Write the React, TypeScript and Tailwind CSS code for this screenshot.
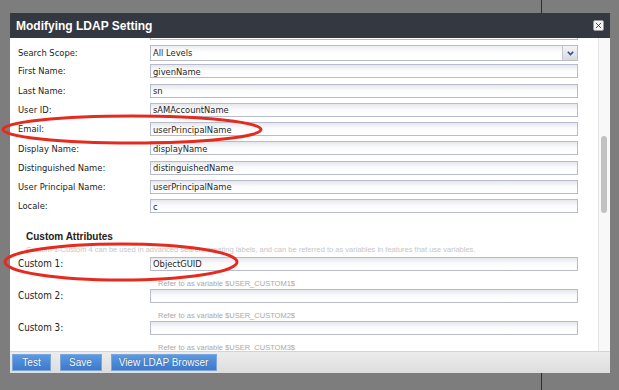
import { X } from "lucide-react";

const fields: [string, string][] = [
  ["First Name:", "givenName"],
  ["Last Name:", "sn"],
  ["User ID:", "sAMAccountName"],
  ["Email:", "userPrincipalName"],
  ["Display Name:", "displayName"],
  ["Distinguished Name:", "distinguishedName"],
  ["User Principal Name:", "userPrincipalName"],
  ["Locale:", "c"],
];

const customs = ["Custom 1:", "Custom 2:", "Custom 3:"];
const customValues = ["ObjectGUID", "", ""];

const font = { fontFamily: '"DejaVu Sans Condensed", "Liberation Sans", sans-serif' };

function TextBox({ value, className = "" }: { value: string; className?: string }) {
  return (
    <div
      className={`flex h-[14px] w-[428px] items-center border border-[#b8bbcc] bg-[linear-gradient(#e6e7ec,#fbfbfc_45%,#fff)] pl-[2px] text-[9.3px] leading-none text-[#1e1e1e] ${className}`}
    >
      {value}
    </div>
  );
}

function Btn({ label, width }: { label: string; width: string }) {
  return (
    <button
      type="button"
      className={`flex h-[17px] ${width} items-center justify-center border border-[#7ea6da] bg-[linear-gradient(#5b9ae2,#3c79cb)] text-[10px] leading-none text-white [text-shadow:0_0_1px_#1d4c8a]`}
      style={{ fontFamily: '"Liberation Sans", sans-serif' }}
    >
      {label}
    </button>
  );
}

export default function App() {
  return (
    <div className="relative h-[390px] w-[619px] overflow-hidden bg-[#7d7d7d]" style={font}>
      {/* page behind the dialog */}
      <div className="h-[13px]">
        <div className="ml-[541px] h-full w-px bg-[#2e2e2e]" />
      </div>

      <div className="ml-[10px] flex h-[360px] w-[600px] flex-col bg-white">
        {/* title bar */}
        <div className="flex h-[25px] items-center justify-between bg-[#343840] pl-[6px] pr-[6px]">
          <span
            className="text-[12px] font-bold leading-none text-white"
            style={{ fontFamily: '"Liberation Sans", sans-serif' }}
          >
            Modifying LDAP Setting
          </span>
          <span className="flex h-[11px] w-[11px] items-center justify-center rounded-[2px] border border-[#9a9a9a] bg-[#f4f4f4]">
            <X size={9} strokeWidth={2.4} className="text-[#3a3a3a]" />
          </span>
        </div>

        {/* body */}
        <div className="flex h-[313px]">
          <div className="w-[588px] overflow-hidden pl-[8px]">
            <div className="-mt-[12px] flex h-[14px] items-center">
              <div className="w-[132px]" />
              <TextBox value="" />
            </div>

            <div className="mt-[5px] flex h-[16px] items-center">
              <div className="w-[132px] text-[9.3px] text-[#222]">Search Scope:</div>
              <div className="flex h-[16px] w-[428px] items-center border border-[#b8bbcc] bg-[linear-gradient(#eeeff2,#fff_50%)] pl-[2px] text-[9.3px] text-[#1e1e1e]">
                <span className="flex-1">All Levels</span>
                <span className="flex h-[14px] w-[15px] items-center justify-center border-l border-[#c4c6d2] bg-[linear-gradient(#f4f4f6,#d9dae0)]">
                  <svg width="7" height="5" viewBox="0 0 7 5">
                    <path d="M0.8 0.8 L3.5 3.6 L6.2 0.8" fill="none" stroke="#2f4f8f" strokeWidth="1.6" />
                  </svg>
                </span>
              </div>
            </div>

            <div className="mt-[3.3px] flex flex-col gap-[5.3px]">
              {fields.map(([label, value]) => (
                <div key={label} className="flex h-[14px] items-center">
                  <div className="w-[132px] text-[9.3px] text-[#222]">{label}</div>
                  <TextBox value={value} />
                </div>
              ))}
            </div>

            <div className="mt-[18px] pl-[8px] text-[10px] font-bold leading-[12px] text-[#222]" style={{ fontFamily: '"Liberation Sans", sans-serif' }}>
              Custom Attributes
            </div>
            <div className="mt-[1.5px] whitespace-nowrap pl-[8px] text-[7.5px] leading-[9px] text-[#c6c6c6]" style={{ fontFamily: '"Liberation Sans", sans-serif' }}>
              Custom 1-Custom 4 can be used in advanced search, creating labels, and can be referred to as variables in features that use variables.
            </div>

            <div className="mt-[2.7px] flex flex-col">
              {customs.map((label, i) => (
                <div key={label}>
                  <div className="flex h-[14px] items-center">
                    <div className="w-[132px] pt-[2px] text-[9.8px] text-[#222]">{label}</div>
                    <TextBox value={customValues[i]} />
                  </div>
                  <div
                    className="mt-[8px] h-[10px] pl-[140px] text-[7.5px] leading-[10px] text-[#a9a9a9]"
                    style={{ fontFamily: '"Liberation Sans", sans-serif' }}
                  >
                    Refer to as variable $USER_CUSTOM{i + 1}$
                  </div>
                </div>
              ))}
            </div>
          </div>

          {/* scrollbar */}
          <div className="w-[12px] border-l border-[#e4e4e4] bg-[#f8f8f8] pl-[2px] pt-[98px]">
            <div className="h-[77px] w-[6px] rounded-full bg-[#c2c2c2]" />
          </div>
        </div>

        {/* footer */}
        <div className="flex h-[22px] items-center border-t border-[#d4d4d4] bg-[linear-gradient(#ececec,#dddddd)] pl-[2px]">
          <Btn label="Test" width="w-[39px]" />
          <div className="w-[8.5px]" />
          <Btn label="Save" width="w-[42px]" />
          <div className="w-[9px]" />
          <Btn label="View LDAP Browser" width="w-[106px]" />
        </div>
      </div>

      <div className="h-[17px]">
        <div className="ml-[541px] h-full w-px bg-[#2e2e2e]" />
      </div>

      {/* red annotation ellipses */}
      <svg className="pointer-events-none absolute inset-0" width="619" height="390" viewBox="0 0 619 390">
        <ellipse cx="132" cy="129.5" rx="129" ry="13.5" fill="none" stroke="#e52a20" strokeWidth="3" />
        <ellipse cx="121" cy="262" rx="116" ry="18" fill="none" stroke="#e52a20" strokeWidth="3" />
      </svg>
    </div>
  );
}
